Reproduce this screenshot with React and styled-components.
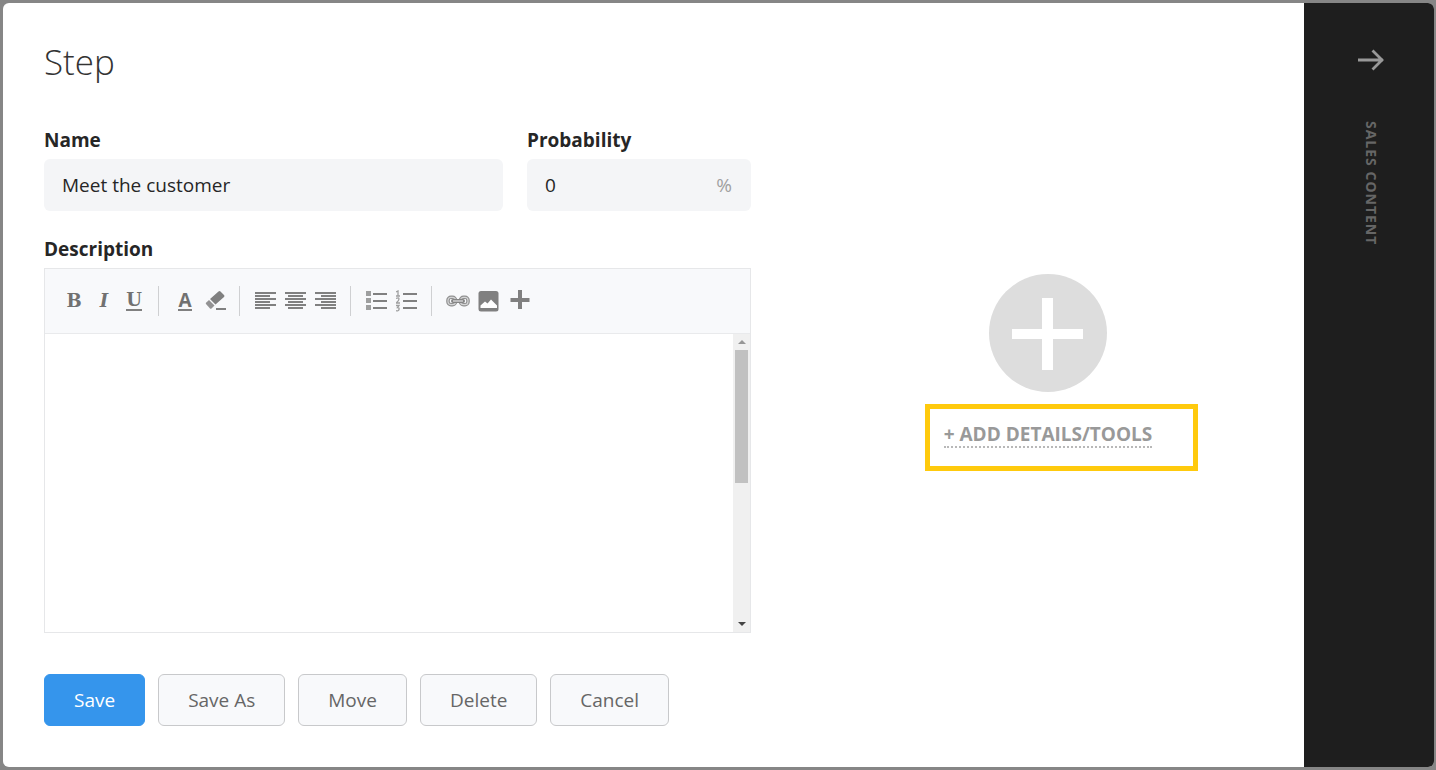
import React from 'react'
import styled, { createGlobalStyle } from 'styled-components'

const GlobalStyle = createGlobalStyle`
  * {
    box-sizing: border-box;
  }
  body {
    margin: 0;
    background-color: #868686;
    font-family: "Open Sans", "Noto Sans", sans-serif;
    color: #262626;
  }
  button, input, textarea {
    font-family: inherit;
  }
`

const Backdrop = styled.div`
  display: flex;
  min-height: 100vh;
  padding: 3px 2px 3px 3px;
`

const Modal = styled.div`
  display: flex;
  flex: 1;
  border-radius: 6px;
  overflow: hidden;
  background-color: #fff;
`

const Content = styled.main`
  display: grid;
  grid-template-columns: minmax(0, 707fr) minmax(0, 512fr);
  column-gap: 41px;
  flex: 1;
  padding-left: 41px;
`

const Form = styled.form`
  display: flex;
  flex-direction: column;
  padding: 37px 0 41px;
`

const Title = styled.h1`
  margin: 0 0 42px;
  color: #333;
  font-size: 35px;
  font-weight: 300;
  line-height: 44px;
`

const Fields = styled.div`
  display: grid;
  grid-template-columns: minmax(0, 459fr) minmax(0, 224fr);
  gap: 24px;
  margin-bottom: 24px;
`

const Label = styled.label`
  display: block;
  margin-bottom: 5px;
  font-size: 19px;
  font-weight: 700;
  line-height: 28px;
`

const InputBox = styled.div`
  display: flex;
  align-items: center;
  height: 52px;
  padding: 0 19px 0 18px;
  border-radius: 6px;
  background-color: #f4f5f7;
`

const Input = styled.input`
  flex: 1;
  min-width: 0;
  padding: 0;
  border: 0;
  outline: 0;
  background: transparent;
  color: #262626;
  font-size: 19px;
  line-height: 28px;
`

const Unit = styled.span`
  color: #a0a0a0;
  font-size: 19px;
`

const Editor = styled.div`
  display: flex;
  flex-direction: column;
  flex: 1;
  margin-bottom: 41px;
  border: 1px solid #e6e7e9;
`

const Toolbar = styled.div`
  display: flex;
  align-items: center;
  height: 65px;
  padding: 0 18px;
  border-bottom: 1px solid #e9eaec;
  background-color: #f8f9fb;
`

const ToolGroup = styled.div`
  display: flex;
  gap: ${props => props.$gap || 8}px;

  & + & {
    margin-left: 13px;
    padding-left: 15px;
    border-left: 1px solid #cfd0d2;
  }
`

const Tool = styled.button`
  display: flex;
  align-items: center;
  justify-content: center;
  width: 22px;
  height: 30px;
  padding: 0;
  border: 0;
  background: transparent;
  color: #808080;

  svg {
    flex: none;
    display: block;
  }
`

const Letter = styled.span`
  color: #717171;
  font-family: ${props => (props.$sans ? '"Open Sans", sans-serif' : '"DejaVu Serif", serif')};
  font-size: ${props => (props.$sans ? 19 : 18)}px;
  font-style: ${props => (props.$italic ? 'italic' : 'normal')};
  font-weight: 700;
  line-height: 18px;
  border-bottom: ${props => (props.$underline ? '2px solid #808080' : '0')};
`

const EditorBody = styled.div`
  display: flex;
  flex: 1;
`

const TextArea = styled.textarea`
  flex: 1;
  min-width: 0;
  padding: 16px 18px;
  border: 0;
  outline: 0;
  resize: none;
  overflow: hidden;
  background: transparent;
  font-size: 19px;
`

const ScrollTrack = styled.div`
  display: flex;
  flex-direction: column;
  align-items: center;
  width: 17px;
  background-color: #f0f0f0;
`

const ScrollArrow = styled.span`
  display: flex;
  align-items: center;
  justify-content: center;
  height: 16px;
  color: ${props => props.$color};
`

const ScrollSpace = styled.div`
  flex: 1;
  align-self: stretch;
  padding: 0 2px;
`

const ScrollThumb = styled.div`
  height: 133px;
  background-color: #c1c1c1;
`

const Actions = styled.div`
  display: flex;
  gap: 13px;
`

const Button = styled.button`
  height: 52px;
  padding: 0 29px;
  border: 1px solid ${props => (props.$primary ? '#3595ec' : '#c8c9cb')};
  border-radius: 6px;
  background-color: ${props => (props.$primary ? '#3595ec' : '#f8f9fb')};
  color: ${props => (props.$primary ? '#fff' : '#666')};
  font-size: 19px;
  line-height: 28px;
`

const Details = styled.section`
  display: flex;
  flex-direction: column;
  align-items: center;
  padding-top: 271px;
`

const AddCircle = styled.button`
  width: 118px;
  height: 118px;
  padding: 0;
  border: 0;
  border-radius: 50%;
  background-color: #ddd;

  svg {
    display: block;
  }
`

const AddLink = styled.a`
  position: relative;
  margin-top: 31px;
  border-bottom: 2px dotted #b8b8b8;
  color: #999;
  font-size: 19px;
  font-weight: 700;
  line-height: 23px;
  text-decoration: none;
  white-space: nowrap;
`

/* marker frame drawn over the link */
const Highlight = styled.span`
  position: absolute;
  top: -19px;
  right: -46px;
  bottom: -25px;
  left: -19px;
  border: 5px solid #ffca0d;
`

const Sidebar = styled.aside`
  display: flex;
  flex-direction: column;
  align-items: center;
  width: 130px;
  padding: 42px 0 0 3px;
  background-color: #1e1e1e;
`

const ArrowButton = styled.button`
  padding: 0;
  border: 0;
  background: transparent;
  color: #999;

  svg {
    display: block;
  }
`

const SidebarTitle = styled.h2`
  margin: 46px 0 0;
  color: #666;
  font-size: 14px;
  font-weight: 700;
  letter-spacing: 1px;
  line-height: 20px;
  writing-mode: vertical-rl;
`

const lines = {
  left: [[0, 21], [0, 15], [0, 21], [0, 15], [0, 21], [0, 15]],
  center: [[0, 21], [3, 15], [0, 21], [3, 15], [0, 21], [3, 15]],
  right: [[0, 21], [6, 15], [0, 21], [6, 15], [0, 21], [6, 15]],
}

const AlignIcon = ({ type }) => (
  <svg width="22" height="20" viewBox="0 0 22 20" fill="currentColor">
    {lines[type].map(([x, width], i) => (
      <rect key={i} x={x} y={1 + i * 3} width={width} height="2" />
    ))}
  </svg>
)

const BulletIcon = () => (
  <svg width="22" height="22" viewBox="0 0 22 22" fill="currentColor">
    {[1, 8, 15].map(y => (
      <React.Fragment key={y}>
        <rect x="0" y={y} width="5" height="5" opacity="0.75" />
        <rect x="7" y={y + 2} width="14" height="2" />
      </React.Fragment>
    ))}
  </svg>
)

const NumberedIcon = () => (
  <svg width="22" height="22" viewBox="0 0 22 22" fill="currentColor">
    {[1, 8, 15].map(y => (
      <rect key={y} x="7" y={y + 2} width="14" height="2" />
    ))}
    <path
      d="M0 2l2-1v5M0 6h4M0 8.500q3-1.500 3 .5t-3 4h4M0 15.500h3l-1.500 2q2 0 1.500 2t-3 1"
      fill="none"
      stroke="currentColor"
      strokeWidth="1.300"
      opacity="0.75"
    />
  </svg>
)

const EraserIcon = () => (
  <svg width="22" height="22" viewBox="0 0 22 22" fill="currentColor">
    <path d="M14.500 1.500q1-1 2 0l3.500 3.500q1 1 0 2l-8.500 7.500-5.500-5.500z" />
    <path d="M5 10l5.500 5.500-3 3q-.7.500-1.500 0l-4-4.500q-.5-.7 0-1.300z" opacity="0.85" />
    <path d="M12 18h10v2H12z" />
  </svg>
)

const LinkIcon = () => (
  <svg width="24" height="14" viewBox="0 0 24 14" fill="none">
    <g stroke="#909090" strokeWidth="3.600">
      <rect x="2" y="3.300" width="7.500" height="7.400" rx="3" />
      <rect x="14.500" y="3.300" width="7.500" height="7.400" rx="3" />
    </g>
    <g stroke="#d4d5d6" strokeWidth="1.200">
      <rect x="2" y="3.300" width="7.500" height="7.400" rx="3" />
      <rect x="14.500" y="3.300" width="7.500" height="7.400" rx="3" />
    </g>
    <path d="M7 7h10" stroke="#858585" strokeWidth="4" strokeLinecap="round" />
    <path d="M7 7h10" stroke="#d4d5d6" strokeWidth="1.400" />
  </svg>
)

const ImageIcon = () => (
  <svg width="22" height="22" viewBox="0 0 22 22">
    <rect x="0.500" y="1" width="20" height="20.500" rx="2.500" fill="currentColor" />
    <path d="M2.500 18v-2.500l4.500-4 2.500 2 3.500-4 6 6V18z" fill="#fff" />
  </svg>
)

const PlusIcon = () => (
  <svg width="20" height="22" viewBox="0 0 20 22" fill="currentColor">
    <path d="M8 0h4v8h7.500v4H12v7H8v-7H.5V8H8z" />
  </svg>
)

const Field = ({ id, label, value, unit }) => (
  <div>
    <Label htmlFor={id}>{label}</Label>
    <InputBox>
      <Input id={id} type="text" defaultValue={value} />
      {unit && <Unit>{unit}</Unit>}
    </InputBox>
  </div>
)

const EditorToolbar = () => (
  <Toolbar>
    <ToolGroup>
      <Tool type="button" aria-label="Bold"><Letter>B</Letter></Tool>
      <Tool type="button" aria-label="Italic"><Letter $italic>I</Letter></Tool>
      <Tool type="button" aria-label="Underline"><Letter $underline>U</Letter></Tool>
    </ToolGroup>
    <ToolGroup>
      <Tool type="button" aria-label="Text color"><Letter $sans $underline>A</Letter></Tool>
      <Tool type="button" aria-label="Clear formatting"><EraserIcon /></Tool>
    </ToolGroup>
    <ToolGroup>
      <Tool type="button" aria-label="Align left"><AlignIcon type="left" /></Tool>
      <Tool type="button" aria-label="Align center"><AlignIcon type="center" /></Tool>
      <Tool type="button" aria-label="Align right"><AlignIcon type="right" /></Tool>
    </ToolGroup>
    <ToolGroup>
      <Tool type="button" aria-label="Bulleted list"><BulletIcon /></Tool>
      <Tool type="button" aria-label="Numbered list"><NumberedIcon /></Tool>
    </ToolGroup>
    <ToolGroup $gap={9}>
      <Tool type="button" aria-label="Insert link"><LinkIcon /></Tool>
      <Tool type="button" aria-label="Insert image"><ImageIcon /></Tool>
      <Tool type="button" aria-label="More"><PlusIcon /></Tool>
    </ToolGroup>
  </Toolbar>
)

const Scrollbar = () => (
  <ScrollTrack>
    <ScrollArrow $color="#969696">
      <svg width="8" height="4" viewBox="0 0 8 4" fill="currentColor"><path d="M0 4l4-4 4 4z" /></svg>
    </ScrollArrow>
    <ScrollSpace>
      <ScrollThumb />
    </ScrollSpace>
    <ScrollArrow $color="#444">
      <svg width="8" height="4" viewBox="0 0 8 4" fill="currentColor"><path d="M0 0h8l-4 4z" /></svg>
    </ScrollArrow>
  </ScrollTrack>
)

const App = () => {
  return (
    <>
      <GlobalStyle />
      <Backdrop>
        <Modal>
          <Content>
            <Form onSubmit={e => e.preventDefault()}>
              <Title>Step</Title>
              <Fields>
                <Field id="name" label="Name" value="Meet the customer" />
                <Field id="probability" label="Probability" value="0" unit="%" />
              </Fields>
              <Label htmlFor="description">Description</Label>
              <Editor>
                <EditorToolbar />
                <EditorBody>
                  <TextArea id="description" />
                  <Scrollbar />
                </EditorBody>
              </Editor>
              <Actions>
                <Button type="submit" $primary>Save</Button>
                <Button type="button">Save As</Button>
                <Button type="button">Move</Button>
                <Button type="button">Delete</Button>
                <Button type="button">Cancel</Button>
              </Actions>
            </Form>
            <Details>
              <AddCircle type="button" aria-label="Add details">
                <svg width="118" height="118" viewBox="0 0 118 118" fill="#fff">
                  <path d="M53 24h11v31h30v10H64v31H53V65H23V55h30z" />
                </svg>
              </AddCircle>
              <AddLink href="#details">
                + ADD DETAILS/TOOLS
                <Highlight />
              </AddLink>
            </Details>
          </Content>
          <Sidebar>
            <ArrowButton type="button" aria-label="Collapse">
              <svg width="28" height="30" viewBox="0 0 28 30" fill="none" stroke="currentColor" strokeWidth="2.800">
                <path d="M1 15h25M15.500 5.500l9.500 9.500-9.500 9.500" />
              </svg>
            </ArrowButton>
            <SidebarTitle>SALES CONTENT</SidebarTitle>
          </Sidebar>
        </Modal>
      </Backdrop>
    </>
  )
}

export default App
